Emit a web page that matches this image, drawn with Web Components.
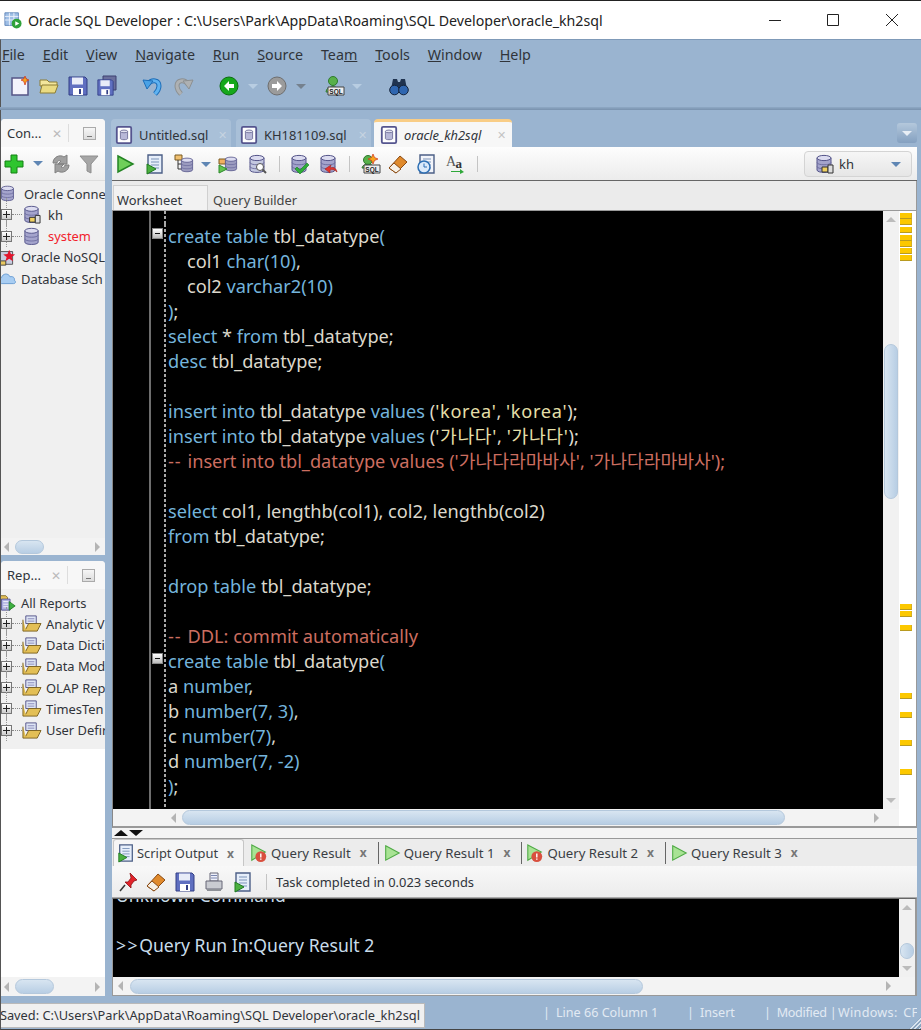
<!DOCTYPE html>
<html>
<head>
<meta charset="utf-8">
<title>Oracle SQL Developer</title>
<style>
  html, body { margin: 0; padding: 0; height: 100%; overflow: hidden; }
  body {
    width: 921px; height: 1030px; background: #9ab4d0; color: #30343a;
    font: 13px "Noto Sans", "Liberation Sans", sans-serif;
    display: flex; flex-direction: column; box-sizing: border-box;
  }
</style>
</head>
<body>
<script>
// every icon is a small inline svg, 20 units square
const cyl = (fill = '#a4a4cc') => `<path d="M3 4v12c0 3.2 14 3.2 14 0V4z" fill="${fill}" stroke="#55558a"/><ellipse cx="10" cy="4" rx="7" ry="2.6" fill="#dcdcf0" stroke="#55558a"/><path d="M3 8.5c0 3 14 3 14 0M3 12.5c0 3 14 3 14 0" fill="none" stroke="#6a6a9c" stroke-width=".9"/>`;
const page = (fill = '#eef2fa') => `<path d="M3 1h14v18H3z" fill="${fill}" stroke="#4c5f86" stroke-width="1.4"/><path d="M6 5h8M6 8h8M6 11h8M6 14h8" stroke="#7b93b8"/>`;
const floppy = `<path d="M1 1h16l2 2v16H1z" fill="#5f6fc0" stroke="#333f85"/><path d="M4 1.500h11v7H4z" fill="#e8ecf8"/><path d="M5 12h10v7H5z" fill="#fff"/><path d="M11 13h2v5h-2z" fill="#333f85"/>`;
const sqlBox = `<path d="M4 11h16v8H4z" fill="#eee" stroke="#444"/><text x="12" y="17.500" font-size="6.500" font-weight="700" text-anchor="middle" font-family="Liberation Sans" fill="#222">SQL</text>`;
const eraser = `<path d="M1 14L12 2l7 6L8 19z" fill="#e08a2c" stroke="#8a4a12"/><path d="M1 14l5-5 7 6-5 4z" fill="#f6f0e6" stroke="#8a4a12"/>`;
const folderOpen = `<path d="M4 2h11v8H4z" fill="#dfe6f5" stroke="#55558a"/><path d="M6 5h7M6 7.500h7" stroke="#8888b8"/><path d="M1 6v12h15l4-8H7l-3 6" fill="#e3bf55" stroke="#7d6420"/>`;
const ICONS = {
  app: `<path d="M1 2h15v14H1z" fill="#9fbfe6" stroke="#5d84b8"/><path d="M1 6h15M1 10h15M6 2v14M11 2v14" stroke="#eef4fc"/><circle cx="14" cy="14" r="5.500" fill="#2fa23a"/><path d="M12.500 11.500l4.500 2.500-4.500 2.500z" fill="#fff"/>`,
  new: `<path d="M2 2h13l3 3v14H2z" fill="#f3f3fb" stroke="#565686" stroke-width="1.500"/><path d="M15 0l1.300 3 2.700 1-2.700 1.200L15 9l-1.300-3.800L11 4l2.700-1z" fill="#f5a51c" stroke="#d03020" stroke-width=".7"/>`,
  open: `<path d="M1 4h7l2 2h8v4H1z" fill="#f3e69c" stroke="#8c7c34"/><path d="M1 17l2-8h16l-3 8z" fill="#eadb82" stroke="#8c7c34"/>`,
  save: floppy,
  saveall: `<path d="M6 0h13v14H6z" fill="#6a6f9c" stroke="#3c4070"/><g transform="translate(0 3) scale(.85)">${floppy}</g>`,
  undo: `<path d="M5 8c4-5 11-4 11 2 0 3-2 6-4 8" fill="none" stroke="#1c6db8" stroke-width="5"/><path d="M5 8c4-5 11-4 11 2 0 3-2 6-4 8" fill="none" stroke="#5fb2f0" stroke-width="3"/><path d="M0 4l10 1-6 8z" fill="#4aa2e6" stroke="#1c6db8"/>`,
  redo: `<path d="M15 8c-4-5-11-4-11 2 0 3 2 6 4 8" fill="none" stroke="#8c9092" stroke-width="5"/><path d="M15 8c-4-5-11-4-11 2 0 3 2 6 4 8" fill="none" stroke="#aeb1b3" stroke-width="3"/><path d="M20 4l-10 1 6 8z" fill="#aeb1b3" stroke="#8c9092"/>`,
  back: `<circle cx="10" cy="10" r="9" fill="#16a81c" stroke="#0b6d10"/><path d="M10 5l-5 5 5 5v-3h5V8h-5z" fill="#fff"/>`,
  fwd: `<circle cx="10" cy="10" r="9" fill="#9b9b9b" stroke="#6e6e6e"/><path d="M10 5l5 5-5 5v-3H5V8h5z" fill="#fff"/>`,
  sqlperson: `<circle cx="9" cy="5" r="4.500" fill="#58b04a" stroke="#2e7a2e"/><path d="M2 16c0-7 14-7 14 0z" fill="#7cc46c" stroke="#2e7a2e"/>${sqlBox}`,
  binoc: `<path d="M2 13l2-10h4l1 3h2l1-3h4l2 10z" fill="#1f3350"/><circle cx="5.500" cy="14" r="4.800" fill="#2f66b0" stroke="#14233a"/><circle cx="14.500" cy="14" r="4.800" fill="#2f66b0" stroke="#14233a"/>`,
  plus: `<path d="M7 1h6v6h6v6h-6v6H7v-6H1V7h6z" fill="#2ec52e" stroke="#128012"/>`,
  refresh: `<path d="M2 9c0-6 7-9 11-6l3-2v9H7l3-3c-2-1-4 0-4 2zM18 11c0 6-7 9-11 6l-3 2v-9h9l-3 3c2 1 4 0 4-2z" fill="#a0a0a0" stroke="#808080"/>`,
  funnel: `<path d="M1 2h18l-7 8v9l-4-2v-7z" fill="#a6a6a6" stroke="#8e8e8e"/>`,
  db: cyl(),
  dbplug: cyl() + `<path d="M8 13h6v5H8z" fill="#f0d060" stroke="#333"/><path d="M14 11h5v8h-5z" fill="#ddd" stroke="#333"/>`,
  nosql: `<path d="M1 3h15v15H1z" fill="#c8cce0" stroke="#444"/><path d="M12 1l2 5 5 .400-4 3 1.400 5-4.400-3-4.400 3L9 9.400l-4-3 5-.400z" fill="#e3142c"/><path d="M1 14h7v5H1z" fill="#e8c860" stroke="#333"/>`,
  cloud: `<path d="M3 16a3.500 3.500 0 0 1 0-7c1-5 8-6 10-1 3-1 6 1 5 4 2 1 2 4-1 4z" fill="#a8cdf2" stroke="#5d94cf"/>`,
  docdb: `<rect x="2" y="1" width="16" height="18" rx="1.500" fill="#fff" stroke="#55558f" stroke-width="2"/><path d="M6 6v8c0 1.600 8 1.600 8 0V6z" fill="#b8b8d8" stroke="#6f6f99"/><ellipse cx="10" cy="6" rx="4" ry="1.500" fill="#e4e4f2" stroke="#6f6f99"/>`,
  run: `<path d="M3 2l15 8-15 8z" fill="#6fcf5a" stroke="#238423" stroke-width="1.500"/>`,
  script: page('#e6eefa') + `<path d="M2 10l9 5-9 5z" fill="#4cb040" stroke="#1f7a1f"/>`,
  tree: `<path d="M1 1h7v5H1z" fill="#f0c070" stroke="#7a5a20"/><path d="M4 6v9h4M4 10h4" stroke="#333" fill="none"/><g transform="translate(5 3) scale(.8)">${cyl('#9b9bbf')}</g>`,
  explain: `<path d="M1 5h7v5H1z" fill="#f0b060" stroke="#7a5a20"/><g transform="translate(5 2) scale(.8)">${cyl('#9b9bbf')}</g><path d="M1 11l8 4-8 4z" fill="#63c24f" stroke="#2b8a2b"/>`,
  trace: cyl('#c4c8e0') + `<circle cx="13" cy="13" r="3.500" fill="#fff" stroke="#555"/><path d="M15.500 15.500l3.500 3.500" stroke="#555" stroke-width="2"/>`,
  commit: cyl() + `<path d="M8 13l3 3 7-7 2 2-9 9-5-5z" fill="#2eae38" stroke="#167a1e" stroke-width=".6"/>`,
  rollback: cyl() + `<path d="M19 18c-1-5-5-5-7-4l1-3-6 4 5 4v-3c3-1 5 0 7 2z" fill="#e2352e" stroke="#a0201c" stroke-width=".6"/>`,
  sqlstar: `<circle cx="8" cy="6" r="4.500" fill="#58b04a" stroke="#2e7a2e"/><path d="M2 14c0-5 12-5 12 0z" fill="#7cc46c" stroke="#2e7a2e"/>${sqlBox}<path d="M13 0l1.500 3.500L18 5l-3.500 1.500L13 10l-1.500-3.500L8 5l3.500-1.500z" fill="#f5a51c" stroke="#d03020" stroke-width=".7"/>`,
  eraser,
  clock: page('#f2f4fa') + `<circle cx="7" cy="13" r="6" fill="#dceafa" stroke="#2c6fb4" stroke-width="1.500"/><path d="M7 9.500V13h3" stroke="#2c6fb4" fill="none"/>`,
  case: `<text x="0" y="12" font-family="Liberation Serif" font-size="14" fill="#555">A</text><text x="9.500" y="14" font-family="Liberation Serif" font-weight="700" font-size="13" fill="#333">a</text><path d="M5 17h9v-2l4 3-4 2v-2H5z" fill="#2fa83a"/>`,
  pin: `<path d="M12 1l7 7-3 1-3 4 0 3-6-6 3 0 3-4z" fill="#e2232a" stroke="#8c1014" stroke-width=".8"/><path d="M7 13l-5 6" stroke="#333" stroke-width="1.500"/>`,
  print: `<path d="M6 1h8v8H6z" fill="#eef0fa" stroke="#667"/><path d="M2 9h16v8H2z" fill="#c9cbd1" stroke="#667"/><path d="M3 17h14v2H3z" fill="#8d9096"/><path d="M7 3.500h6M7 6h6" stroke="#7a86b0"/>`,
  resultok: `<path d="M3 2l15 8-15 8z" fill="#a8e394" stroke="#4faa45" stroke-width="1.200"/>`,
  resulterr: `<path d="M2 1l15 8-15 9z" fill="#a8e394" stroke="#4faa45" stroke-width="1.200"/><circle cx="12" cy="14" r="6" fill="#d9503f"/><path d="M11.200 10.500h1.600v4.500h-1.600zM11.200 16h1.600v1.500h-1.600z" fill="#fff"/>`,
  folder: folderOpen,
  reports: `<path d="M0 2h8l2 2v3H0z" fill="#e3bf55" stroke="#7d6420"/><path d="M3 6h10v13H3z" fill="#aeb0e0" stroke="#4c4c8c"/><path d="M5 9h6M5 12h6M5 15h6" stroke="#fff"/><path d="M12 9l7 5-7 5z" fill="#3eb040" stroke="#1e7a20"/>`
};

class AppIcon extends HTMLElement {
  connectedCallback() {
    const size = this.getAttribute('size') || 20;
    this.attachShadow({ mode: 'open' }).innerHTML = `
      <style>:host { display: inline-flex; flex: none; width: ${size}px; height: ${size}px; } svg { overflow: visible; }</style>
      <svg width="${size}" height="${size}" viewBox="0 0 20 20">${ICONS[this.getAttribute('name')] || ''}</svg>`;
  }
}
customElements.define('app-icon', AppIcon);

const titleBar = document.createElement('template');
titleBar.innerHTML = `
  <style>
    :host { display: flex; align-items: center; height: 38px; background: #fff; border-top: 1px solid #222; color: #222; font-size: 14.200px; flex: none; }
    .logo { margin: 0 6px 0 4px; }
    .text { flex: 1; white-space: nowrap; }
    .btn { width: 58.500px; display: flex; justify-content: center; }
  </style>
  <app-icon class="logo" name="app" size="18"></app-icon>
  <div class="text"><slot></slot></div>
  <div class="btn"><svg width="14" height="14" stroke="#222" fill="none"><path d="M1 7.500h12"/></svg></div>
  <div class="btn"><svg width="14" height="14" stroke="#222" fill="none"><path d="M1.500 1.500h11v11h-11z"/></svg></div>
  <div class="btn"><svg width="14" height="14" stroke="#222" fill="none"><path d="M1 1l12 12M13 1L1 13"/></svg></div>
`;
class TitleBar extends HTMLElement {
  constructor() { super(); this.attachShadow({ mode: 'open' }).appendChild(titleBar.content.cloneNode(true)); }
}
customElements.define('title-bar', TitleBar);

class MenuBar extends HTMLElement {
  connectedCallback() {
    const items = [['F','ile'],['E','dit'],['V','iew'],['N','avigate'],['R','un'],['S','ource'],['Tea','m',1],['T','ools'],['W','indow'],['H','elp']];
    const html = items.map(([a, b, late]) => late ? `<span>${a}<u>${b}</u></span>` : `<span><u>${a}</u>${b}</span>`).join('');
    this.attachShadow({ mode: 'open' }).innerHTML = `
      <style>
        :host { display: flex; align-items: center; gap: 17.800px; height: 32px; padding: 0 0 3px 1px; border-top: 1px solid #7f9ab8; border-left: 1px solid #555; font-size: 14.300px; color: #30343a; flex: none; box-sizing: border-box; }
      </style>${html}`;
  }
}
customElements.define('menu-bar', MenuBar);

// row of icons, spaced with <i> spacers by its user
const iconRow = document.createElement('template');
iconRow.innerHTML = `
  <style>
    :host { display: flex; align-items: center; flex: none; }
    ::slotted(i) { display: block; flex: none; }
  </style>
  <slot></slot>
`;
class IconRow extends HTMLElement {
  constructor() { super(); this.attachShadow({ mode: 'open' }).appendChild(iconRow.content.cloneNode(true)); }
}
customElements.define('icon-row', IconRow);

class DropArrow extends HTMLElement {
  connectedCallback() {
    const c = this.getAttribute('color') || '#b8cde2';
    this.attachShadow({ mode: 'open' }).innerHTML = `
      <style>:host { display: inline-block; flex: none; width: 0; height: 0; border-left: 5px solid transparent; border-right: 5px solid transparent; border-top: 5px solid ${c}; }</style>`;
  }
}
customElements.define('drop-arrow', DropArrow);

class VSep extends HTMLElement {
  connectedCallback() {
    this.attachShadow({ mode: 'open' }).innerHTML = `<style>:host { display: block; flex: none; width: 1px; height: 16px; background: #c4c4c4; }</style>`;
  }
}
customElements.define('v-sep', VSep);

const hScroll = document.createElement('template');
hScroll.innerHTML = `
  <style>
    :host { display: flex; align-items: center; flex: none; background: #f3f3f3; box-sizing: border-box; }
    .arrow { flex: none; width: 0; height: 0; border-top: 5px solid transparent; border-bottom: 5px solid transparent; }
    .l { border-right: 5px solid #b4b4b4; }
    .r { border-left: 5px solid #b4b4b4; }
    .thumb { flex: none; box-sizing: border-box; background: linear-gradient(#d8e5f1, #b8cee4); border: 1px solid #b4c8dc; border-radius: 8px; }
    .fill { flex: 1; }
  </style>
  <div class="pre"></div><div class="arrow l"></div><div class="gap"></div>
  <div class="thumb"></div><div class="fill"></div>
  <div class="arrow r"></div><div class="post"></div>
`;
class HScroll extends HTMLElement {
  constructor() { super(); this.attachShadow({ mode: 'open' }).appendChild(hScroll.content.cloneNode(true)); }
  connectedCallback() {
    const s = this.shadowRoot;
    const num = (n, d) => (this.getAttribute(n) || d) + 'px';
    this.style.height = num('h', 16);
    s.querySelector('.pre').style.width = num('pre', 2);
    s.querySelector('.gap').style.width = num('gap', 3);
    s.querySelector('.post').style.width = num('post', 4);
    const t = s.querySelector('.thumb');
    t.style.width = num('thumb', 30);
    t.style.height = num('th', 14);
  }
}
customElements.define('h-scroll', HScroll);

const vScroll = document.createElement('template');
vScroll.innerHTML = `
  <style>
    :host { display: flex; flex-direction: column; align-items: center; flex: none; width: 16px; background: #f1f1f1; box-sizing: border-box; }
    .arrow { flex: none; width: 0; height: 0; border-left: 5px solid transparent; border-right: 5px solid transparent; }
    .u { border-bottom: 5px solid #bcbcbc; margin-top: 6px; }
    .d { border-top: 5px solid #bcbcbc; margin-bottom: 6px; }
    .thumb { flex: none; width: 14px; box-sizing: border-box; background: linear-gradient(90deg, #d8e5f1, #b8cee4); border: 1px solid #b4c8dc; border-radius: 7px; }
    .fill { flex: 1; }
  </style>
  <div class="arrow u"></div><div class="gap"></div><div class="thumb"></div><div class="fill"></div><div class="arrow d"></div>
`;
class VScroll extends HTMLElement {
  constructor() { super(); this.attachShadow({ mode: 'open' }).appendChild(vScroll.content.cloneNode(true)); }
  connectedCallback() {
    this.shadowRoot.querySelector('.gap').style.height = this.getAttribute('gap') + 'px';
    this.shadowRoot.querySelector('.thumb').style.height = this.getAttribute('thumb') + 'px';
  }
}
customElements.define('v-scroll', VScroll);

// tree row: level 0 sits at the left edge, level 1 has the plus box and dotted stem
const treeNode = document.createElement('template');
treeNode.innerHTML = `
  <style>
    :host { display: flex; align-items: center; height: 21.250px; white-space: nowrap; font-size: 12.900px; color: #30343a; position: relative; }
    .box { flex: none; width: 9px; height: 9px; background: linear-gradient(#fff, #ccc); border: 1px solid #777; box-sizing: content-box; position: relative; }
    .box:before { content: ""; position: absolute; left: 1px; right: 1px; top: 4px; height: 1px; background: #222; }
    .box:after { content: ""; position: absolute; top: 1px; bottom: 1px; left: 4px; width: 1px; background: #222; }
    .dots { flex: none; width: 10px; border-top: 1px dotted #888; }
    .stem { position: absolute; left: 5px; top: -6px; bottom: 0; border-left: 1px dotted #999; }
    :host([red]) .label { color: #f2222c; }
  </style>
`;
class TreeNode extends HTMLElement {
  constructor() { super(); this.attachShadow({ mode: 'open' }).appendChild(treeNode.content.cloneNode(true)); }
  connectedCallback() {
    const child = this.hasAttribute('child');
    const gap = this.getAttribute('gap') || 5;
    const wrap = document.createElement('template');
    wrap.innerHTML = (child ? `<div class="stem"></div><div class="box"></div><div class="dots"></div>` : '') +
      `<app-icon name="${this.getAttribute('icon')}" size="${child ? 19 : 17}" style="margin-left:${child ? 0 : -2}px"></app-icon><span class="label" style="margin-left:${gap}px"><slot></slot></span>`;
    this.shadowRoot.appendChild(wrap.content);
  }
}
customElements.define('tree-node', TreeNode);

const sidePanel = document.createElement('template');
sidePanel.innerHTML = `
  <style>
    :host { display: flex; flex-direction: column; background: #f0f0f0; min-height: 0; overflow: hidden; border-radius: 4px 4px 0 0; }
    .head { flex: none; height: 28px; display: flex; align-items: center; background: #f7f7f7; padding-left: 6px; font-size: 13px; white-space: nowrap; box-sizing: border-box; }
    .x { margin-left: 10px; color: #bbb; font-size: 12px; width: 11px; }
    .sep { width: 1px; height: 18px; background: #ddd; margin-left: 5px; }
    .min { width: 11px; height: 11px; border: 1px solid #aaa; margin-left: 14px; background: linear-gradient(#f6f6f6, #ddd); position: relative; }
    .min:after { content: ""; position: absolute; left: 3px; right: 3px; bottom: 2px; height: 1px; background: #777; }
    .tree { flex: 1; min-height: 0; overflow: hidden; background: var(--tree-bg, #f0f0f0); }
    ::slotted([slot=tools]) { background: linear-gradient(#fdfdfd, #eeeeee); height: 34px; border-bottom: 1px solid #ddd; box-sizing: border-box; }
  </style>
  <div class="head"><span class="name"></span><span class="x">✕</span><span class="sep"></span><span class="min"></span></div>
  <slot name="tools"></slot>
  <div class="tree"><slot></slot></div>
  <slot name="scroll"></slot>
`;
class SidePanel extends HTMLElement {
  constructor() { super(); this.attachShadow({ mode: 'open' }).appendChild(sidePanel.content.cloneNode(true)); }
  connectedCallback() { this.shadowRoot.querySelector('.name').textContent = this.getAttribute('heading'); }
}
customElements.define('side-panel', SidePanel);

// document tab on the blue strip
const docTab = document.createElement('template');
docTab.innerHTML = `
  <style>
    :host { display: flex; align-items: center; height: 28px; flex: none; box-sizing: border-box; padding: 3px 4px 0 4px; gap: 6px; background: #a9c0d8; border-radius: 4px 4px 0 0; font-size: 12.900px; color: #30343a; }
    :host([active]) { background: #f7f7f7; border-top: 3px solid #f9cd86; padding: 0 6px; font-style: italic; }
    .x { margin-left: auto; font-size: 11px; color: #c6d3e0; font-style: normal; }
    :host([active]) .x { color: #c4c4c4; }
  </style>
  <app-icon name="docdb" size="18"></app-icon><slot></slot><span class="x">✕</span>
`;
class DocTab extends HTMLElement {
  constructor() { super(); this.attachShadow({ mode: 'open' }).appendChild(docTab.content.cloneNode(true)); }
}
customElements.define('doc-tab', DocTab);

const K = 'k', W = 'w', S = 's', C = 'c', D = 'c d';
const CODE = [
  { fold: 1, t: [[K,'create table '],[W,'tbl_datatype'],[K,'(']] },
  { t: [[W,'    col1 '],[K,'char(10)'],[W,',']] },
  { t: [[W,'    col2 '],[K,'varchar2(10)']] },
  { t: [[K,')'],[W,';']] },
  { t: [[K,'select '],[W,'* '],[K,'from '],[W,'tbl_datatype;']] },
  { t: [[K,'desc '],[W,'tbl_datatype;']] },
  { t: [] },
  { t: [[K,'insert into '],[W,'tbl_datatype '],[K,'values '],[W,'('],[S,"'korea'"],[W,', '],[S,"'korea'"],[W,');']] },
  { t: [[K,'insert into '],[W,'tbl_datatype '],[K,'values '],[W,'('],[S,"'가나다'"],[W,', '],[S,"'가나다'"],[W,');']] },
  { t: [[D,'-- '],[C,"insert into tbl_datatype values ('가나다라마바사', '가나다라마바사');"]] },
  { t: [] },
  { t: [[K,'select '],[W,'col1, lengthb(col1), col2, lengthb(col2)']] },
  { t: [[K,'from '],[W,'tbl_datatype;']] },
  { t: [] },
  { t: [[K,'drop table '],[W,'tbl_datatype;']] },
  { t: [] },
  { t: [[D,'-- '],[C,'DDL: commit automatically']] },
  { fold: 1, t: [[K,'create table '],[W,'tbl_datatype'],[K,'(']] },
  { t: [[W,'a '],[K,'number'],[W,',']] },
  { t: [[W,'b '],[K,'number(7, 3)'],[W,',']] },
  { t: [[W,'c '],[K,'number(7)'],[W,',']] },
  { t: [[W,'d '],[K,'number(7, -2)']] },
  { t: [[K,')'],[W,';']] },
  { t: [] }
];

class SqlEditor extends HTMLElement {
  connectedCallback() {
    const rows = CODE.map(l => `<div class="row"><div class="gut"></div><div class="fold">${l.fold ? '<b></b>' : ''}</div><div class="code">${l.t.map(([c, s]) => `<span class="${c}">${s}</span>`).join('')}</div></div>`).join('');
    this.attachShadow({ mode: 'open' }).innerHTML = `
      <style>
        :host { display: block; flex: 1; min-width: 0; background: #000; overflow: hidden; font: 18.200px "Noto Sans", "Noto Sans CJK KR", sans-serif; }
        .row { display: flex; height: 25px; line-height: 25px; }
        .top { height: 13px; display: flex; }
        .gut { flex: none; width: 36px; border-right: 2px solid #6e6e6e; box-sizing: content-box; }
        .fold { flex: none; width: 15px; position: relative; background: repeating-linear-gradient(#a8a8a8 0 3px, transparent 3px 5px) right top / 2px 100% no-repeat; }
        .fold b { position: absolute; left: 1px; top: 4px; width: 9px; height: 9px; background: linear-gradient(#fff, #bbb); border: 1px solid #888; }
        .fold b:after { content: ""; position: absolute; left: 2px; right: 2px; top: 4px; height: 1px; background: #111; }
        .code { padding-left: 2px; white-space: pre; }
        .k { color: #74b4dc; } .w { color: #dcd8cc; } .s { color: #e4dfa8; letter-spacing: .7px; } .c { color: #cc6e60; } .d { letter-spacing: 1px; }
      </style>
      <div class="row top"><div class="gut"></div><div class="fold"></div></div>${rows}`;
  }
}
customElements.define('sql-editor', SqlEditor);

class MarkStripe extends HTMLElement {
  connectedCallback() {
    const marks = [214,220,228,236,242,249,256,605,612,626,694,713,741,770];
    // stripe starts at y=212
    const html = marks.map(y => `<i style="top:${y - 212}px"></i>`).join('');
    this.attachShadow({ mode: 'open' }).innerHTML = `
      <style>
        :host { display: block; flex: none; width: 17px; background: #fff; position: relative; }
        i { position: absolute; left: 1px; width: 12px; height: 6px; box-sizing: border-box; background: #fcc800; border-bottom: 1px solid #b89a20; border-right: 1px solid #d8b020; }
      </style>${html}`;
  }
}
customElements.define('mark-stripe', MarkStripe);

const resultTab = document.createElement('template');
resultTab.innerHTML = `
  <style>
    :host { display: flex; align-items: center; flex: none; height: 100%; box-sizing: border-box; font-size: 13.200px; color: #3a3e44; white-space: nowrap; }
    .x { font: 700 12px "Noto Sans", sans-serif; color: #777; margin-left: 9px; }
    :host([active]) { background: #f6f6f6; border: 1px solid #c6c6c6; border-bottom: 0; border-radius: 3px 3px 0 0; padding: 0 7px 0 3px; font-size: 12.900px; }
    :host([sep]) { border-left: 1px solid #666; margin-left: 11px; padding-left: 4px; height: 22px; }
    .lab { margin-left: 3px; }
    :host([active]) .lab { margin-left: 2px; }
  </style>
  <span class="lab"><slot></slot></span><span class="x">x</span>
`;
class ResultTab extends HTMLElement {
  constructor() { super(); this.attachShadow({ mode: 'open' }).appendChild(resultTab.content.cloneNode(true)); }
  connectedCallback() {
    const ic = document.createElement('app-icon');
    ic.setAttribute('name', this.getAttribute('icon'));
    ic.setAttribute('size', 18);
    this.shadowRoot.insertBefore(ic, this.shadowRoot.querySelector('.lab'));
  }
}
customElements.define('result-tab', ResultTab);

const statusBar = document.createElement('template');
statusBar.innerHTML = `
  <style>
    :host { display: flex; align-items: center; flex: none; height: 32px; font-size: 12.600px; color: #e2eaf3; white-space: nowrap; overflow: hidden; border-bottom: 1px solid #444; box-sizing: border-box; position: relative; border-left: 1px solid #555; padding-right: 4px; }
    .saved { flex: none; width: 424px; height: 25px; margin-top: 3px; background: #f0f0f0; color: #30343a; display: flex; align-items: center; justify-content: flex-end; padding-right: 4px; box-sizing: border-box; border: 1px solid #b9b9b9; border-left: 0; overflow: hidden; font-size: 12.800px; }
    .grip { position: absolute; right: 0; bottom: 0; width: 12px; height: 12px; background: repeating-linear-gradient(135deg, #d8e3ee 0 1px, #8aa4bf 1px 3px); clip-path: polygon(100% 0, 100% 100%, 0 100%); }
    .cells { display: flex; flex: 1; min-width: 0; overflow: hidden; padding-left: 118px; margin-top: -3px; }
  </style>
  <div class="saved"><slot name="saved"></slot></div>
  <div class="cells"><slot></slot></div>
  <div class="grip"></div>
`;
class StatusBar extends HTMLElement {
  constructor() { super(); this.attachShadow({ mode: 'open' }).appendChild(statusBar.content.cloneNode(true)); }
}
customElements.define('status-bar', StatusBar);

// one status cell: a bar, then its text
class StatusCell extends HTMLElement {
  connectedCallback() {
    this.attachShadow({ mode: 'open' }).innerHTML = `
      <style>
        :host { display: block; flex: none; width: ${this.getAttribute('w') || 'auto'}${this.hasAttribute('w') ? 'px' : ''}; }
        b { font-weight: 400; margin-right: 6px; }
      </style><b>|</b><slot></slot>`;
  }
}
customElements.define('status-cell', StatusCell);

const appPage = document.createElement('template');
appPage.innerHTML = `
<title-bar>Oracle SQL Developer : C:\\Users\\Park\\AppData\\Roaming\\SQL Developer\\oracle_kh2sql</title-bar>
<menu-bar></menu-bar>
<icon-row style="height:36px;border-left:1px solid #555;padding:0 0 6px 9px;box-sizing:border-box">
  <app-icon name="new"></app-icon><i style="width:9px"></i>
  <app-icon name="open"></app-icon><i style="width:9px"></i>
  <app-icon name="save"></app-icon><i style="width:9px"></i>
  <app-icon name="saveall"></app-icon><i style="width:26px"></i>
  <app-icon name="undo"></app-icon><i style="width:10px"></i>
  <app-icon name="redo"></app-icon><i style="width:26px"></i>
  <app-icon name="back"></app-icon><i style="width:9px"></i>
  <drop-arrow></drop-arrow><i style="width:9px"></i>
  <app-icon name="fwd"></app-icon><i style="width:9px"></i>
  <drop-arrow color="#75818e"></drop-arrow><i style="width:18px"></i>
  <app-icon name="sqlperson"></app-icon><i style="width:8px"></i>
  <drop-arrow></drop-arrow><i style="width:27px"></i>
  <app-icon name="binoc"></app-icon>
</icon-row>
<div style="height:3px;flex:none;background:linear-gradient(#8fa9c5,#7891ad)"></div>
<div style="flex:1;display:flex;min-height:0;padding:9px 4px 2px 0;border-left:1px solid #555">
  <div style="width:104px;display:flex;flex-direction:column;gap:6px">
    <side-panel heading="Con..." style="height:436px;flex:none">
      <icon-row slot="tools" style="padding-left:3px">
        <app-icon name="plus"></app-icon><i style="width:9px"></i>
        <drop-arrow color="#5f86b4"></drop-arrow><i style="width:8px"></i>
        <app-icon name="refresh"></app-icon><i style="width:8px"></i>
        <app-icon name="funnel"></app-icon>
      </icon-row>
      <div style="padding-top:2px">
      <tree-node icon="db" gap="8">Oracle Conne</tree-node>
      <tree-node child icon="dbplug" gap="7">kh</tree-node>
      <tree-node child red icon="db" gap="7">system</tree-node>
      <tree-node icon="nosql">Oracle NoSQL</tree-node>
      <tree-node icon="cloud">Database Sch</tree-node>
      </div>
      <h-scroll slot="scroll" h="17" thumb="29" th="14" gap="6" pre="3" post="5"></h-scroll>
    </side-panel>
    <side-panel heading="Rep..." style="flex:1;--tree-bg:#fff">
      <div style="background:#f0f0f0;padding-top:3px;padding-bottom:8px">
      <tree-node icon="reports">All Reports</tree-node>
      <tree-node child icon="folder">Analytic V</tree-node>
      <tree-node child icon="folder">Data Dicti</tree-node>
      <tree-node child icon="folder">Data Mod</tree-node>
      <tree-node child icon="folder">OLAP Rep</tree-node>
      <tree-node child icon="folder">TimesTen</tree-node>
      <tree-node child icon="folder">User Defir</tree-node>
      </div>
      <h-scroll slot="scroll" h="19" thumb="39" th="15" gap="6" pre="3" post="5"></h-scroll>
    </side-panel>
  </div>
  <div style="width:805px;margin-left:7px;display:flex;flex-direction:column;min-height:0">
    <div style="display:flex;height:28px;flex:none;align-items:flex-end;position:relative;margin-left:-1px">
      <doc-tab style="width:120px;margin-right:5px">Untitled.sql</doc-tab>
      <doc-tab style="width:135px;margin-right:3px">KH181109.sql</doc-tab>
      <doc-tab active style="width:138px">oracle_kh2sql</doc-tab>
      <div style="position:absolute;right:0;top:4px;width:20px;height:20px;border-radius:3px;background:linear-gradient(#b4c8dc,#84a0c0);display:flex;align-items:center;justify-content:center"><drop-arrow color="#e8eef5"></drop-arrow></div>
    </div>
    <div style="height:34px;flex:none;background:linear-gradient(#fdfdfd,#ececec);display:flex;align-items:center;padding:1px 0 0 3px;border-bottom:1px solid #666;box-sizing:border-box">
      <icon-row style="flex:1">
        <app-icon name="run"></app-icon><i style="width:10px"></i>
        <app-icon name="script"></app-icon><i style="width:9px"></i>
        <app-icon name="tree"></app-icon><i style="width:7px"></i>
        <drop-arrow color="#5f86b4"></drop-arrow><i style="width:7px"></i>
        <app-icon name="explain"></app-icon><i style="width:9px"></i>
        <app-icon name="trace"></app-icon><i style="width:12px"></i>
        <v-sep></v-sep><i style="width:9px"></i>
        <app-icon name="commit"></app-icon><i style="width:9px"></i>
        <app-icon name="rollback"></app-icon><i style="width:11px"></i>
        <v-sep></v-sep><i style="width:10px"></i>
        <app-icon name="sqlstar"></app-icon><i style="width:8px"></i>
        <app-icon name="eraser"></app-icon><i style="width:9px"></i>
        <app-icon name="clock"></app-icon><i style="width:9px"></i>
        <app-icon name="case"></app-icon><i style="width:11px"></i>
        <v-sep></v-sep>
      </icon-row>
      <div style="width:108px;height:26px;margin-right:5px;border:1px solid #d4d4d4;border-radius:4px;background:linear-gradient(#f6f6f6,#e6e6e6);display:flex;align-items:center;padding:0 10px 0 9px;gap:5px;box-sizing:border-box;font-size:13px">
        <app-icon name="dbplug"></app-icon><span style="flex:1">kh</span><drop-arrow color="#5f86b4"></drop-arrow>
      </div>
    </div>
    <div style="height:30px;flex:none;background:#ebebeb;display:flex;align-items:flex-end;font-size:12.900px;border-bottom:1px solid #9a9a9a;border-right:1px solid #999;box-sizing:border-box">
      <div style="width:95px;height:25px;box-sizing:border-box;border:1px solid #d0d0d0;border-bottom:0;padding-left:3px;background:#f2f2f2;line-height:28px;margin-left:1px">Worksheet</div>
      <div style="padding-left:5px;line-height:20px;color:#444">Query Builder</div>
    </div>
    <div style="height:617px;flex:none;display:flex;background:#fff;border-left:1px solid #888;border-right:1px solid #999;border-bottom:2px solid #999;box-sizing:border-box">
      <div style="flex:1;min-width:0;display:flex;flex-direction:column">
        <div style="flex:1;min-height:0;display:flex">
          <sql-editor></sql-editor>
          <v-scroll gap="122" thumb="155"></v-scroll>
        </div>
        <h-scroll h="17" pre="58" gap="6" thumb="603" th="15" post="20"></h-scroll>
      </div>
      <mark-stripe></mark-stripe>
    </div>
    <div style="height:10px;flex:none;background:#f4f4f4;display:flex;align-items:center;gap:1px;padding-left:2px;border-bottom:1px solid #999">
      <span style="border:7px solid transparent;border-top:0;border-bottom:6px solid #111"></span>
      <span style="border:7px solid transparent;border-bottom:0;border-top:6px solid #111"></span>
    </div>
    <div style="height:27px;flex:none;background:#ececec;display:flex;align-items:center;padding-left:1px">
      <result-tab active icon="script" style="width:131px">Script Output</result-tab>
      <result-tab icon="resulterr" style="margin-left:6px">Query Result</result-tab>
      <result-tab sep icon="resultok">Query Result 1</result-tab>
      <result-tab sep icon="resulterr">Query Result 2</result-tab>
      <result-tab sep icon="resultok">Query Result 3</result-tab>
    </div>
    <div style="height:32px;flex:none;background:linear-gradient(#f8f8f8,#ececec);border-bottom:1px solid #aaa;box-sizing:border-box;display:flex;align-items:center;padding-left:6px">
      <icon-row>
        <app-icon name="pin"></app-icon><i style="width:8px"></i>
        <app-icon name="eraser"></app-icon><i style="width:9px"></i>
        <app-icon name="save"></app-icon><i style="width:9px"></i>
        <app-icon name="print"></app-icon><i style="width:9px"></i>
        <app-icon name="script"></app-icon><i style="width:13px"></i>
        <v-sep></v-sep><i style="width:9px"></i>
      </icon-row>
      <span style="font-size:12.900px">Task completed in 0.023 seconds</span>
    </div>
    <div style="flex:1;min-height:0;display:flex;flex-direction:column;border:1px solid #999;border-top:1px solid #666;border-right:2px solid #999;box-sizing:border-box;background:#fff">
      <div style="flex:1;min-height:0;display:flex">
        <div style="flex:1;min-width:0;background:#000;overflow:hidden;color:#c8dcea;font:17.600px/25px 'Noto Sans',sans-serif;padding-left:3px">
          <div style="margin-top:-16px">Unknown Command</div>
          <div style="height:25px"></div>
          <div><span style="letter-spacing:1.500px">&gt;&gt;</span>Query Run In:Query Result 2</div>
        </div>
        <v-scroll gap="33" thumb="16"></v-scroll>
      </div>
      <h-scroll h="18" pre="5" gap="7" thumb="513" th="15" post="24"></h-scroll>
    </div>
  </div>
</div>
<status-bar>
  <span slot="saved">Saved: C:\\Users\\Park\\AppData\\Roaming\\SQL Developer\\oracle_kh2sql</span>
  <status-cell w="144">Line 66 Column 1</status-cell>
  <status-cell w="77">Insert</status-cell>
  <status-cell w="74" style="letter-spacing:-.3px">Modified |</status-cell>
  <span style="word-spacing:2px;letter-spacing:.3px">Windows: CF</span>
</status-bar>
`.replace(/\\\\/g, '\\');
document.body.appendChild(appPage.content.cloneNode(true));
</script>
</body>
</html>
